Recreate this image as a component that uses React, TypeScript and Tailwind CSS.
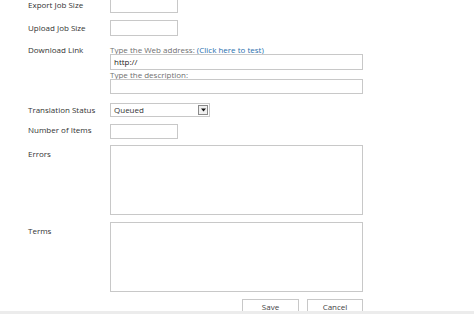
import React from "react";

const font = { fontFamily: '"Open Sans", "Noto Sans", sans-serif' };

function Label({ children, top = 3 }: { children: React.ReactNode; top?: number }) {
  return (
    <div className="w-[82px] shrink-0 text-[8px] leading-[10px] text-[#333]" style={{ paddingTop: top }}>
      {children}
    </div>
  );
}

export default function App() {
  return (
    <div className="relative h-[314px] w-[474px] overflow-hidden bg-white" style={font}>
      <div className="flex flex-col pl-[28px] mt-[-3px]">
        {/* Export Job Size */}
        <div className="flex h-[16px]">
          <Label>Export Job Size</Label>
          <div className="h-[16px] w-[68px] border border-[#c8c8c8]" />
        </div>
        {/* Upload Job Size */}
        <div className="mt-[7px] flex h-[16px]">
          <Label>Upload Job Size</Label>
          <div className="h-[16px] w-[68px] border border-[#c8c8c8]" />
        </div>
        {/* Download Link */}
        <div className="mt-[8px] flex">
          <Label top={1}>Download Link</Label>
          <div className="flex flex-col">
            <div className="h-[11px] text-[8px] leading-[11px] text-[#6f6f6f] whitespace-nowrap">
              Type the Web address: <span className="text-[#1f6fae]">(Click here to test)</span>
            </div>
            <div className="mt-[-1px] flex h-[16px] w-[253px] items-center border border-[#c8c8c8] px-[3px] text-[8px] text-[#222]">
              http://
            </div>
            <div className="mt-[0px] h-[10px] text-[8px] leading-[10px] text-[#6f6f6f]">Type the description:</div>
            <div className="mt-[-1px] h-[15px] w-[253px] border border-[#c8c8c8]" />
          </div>
        </div>
        {/* Translation Status */}
        <div className="mt-[9px] flex h-[14px]">
          <Label top={2}>Translation Status</Label>
          <div className="flex h-[14px] w-[100px] items-center border border-[#c8c8c8]">
            <div className="flex-1 px-[3px] text-[8px] leading-[10px] text-[#333]">Queued</div>
            <div className="mr-[1px] flex h-[10px] w-[10px] items-center justify-center border border-[#8a8a8a] bg-[#f0f0f0]">
              <svg width="5" height="4" viewBox="0 0 5 4">
                <path d="M0 0.5 H5 L2.5 3.5 Z" fill="#111" />
              </svg>
            </div>
          </div>
        </div>
        {/* Number of Items */}
        <div className="mt-[7px] flex h-[15px]">
          <Label top={1}>Number of Items</Label>
          <div className="h-[15px] w-[68px] border border-[#c8c8c8]" />
        </div>
        {/* Errors */}
        <div className="mt-[6px] flex">
          <Label top={4}>Errors</Label>
          <div className="h-[70px] w-[253px] border border-[#c8c8c8]" />
        </div>
        {/* Terms */}
        <div className="mt-[7px] flex">
          <Label top={4}>Terms</Label>
          <div className="h-[70px] w-[253px] border border-[#c8c8c8]" />
        </div>
        {/* Buttons */}
        <div className="mt-[7px] flex h-[12px] w-[335px] justify-end gap-[8px] overflow-hidden">
          <div className="flex h-[20px] w-[57px] justify-center border border-[#c8c8c8] pt-[2px] text-[8px] leading-[9px] text-[#444]">
            Save
          </div>
          <div className="flex h-[20px] w-[56px] justify-center border border-[#c8c8c8] pt-[2px] text-[8px] leading-[9px] text-[#444]">
            Cancel
          </div>
        </div>
      </div>
      <div className="absolute bottom-0 left-0 h-[3px] w-full bg-[#ececec]" />
    </div>
  );
}
